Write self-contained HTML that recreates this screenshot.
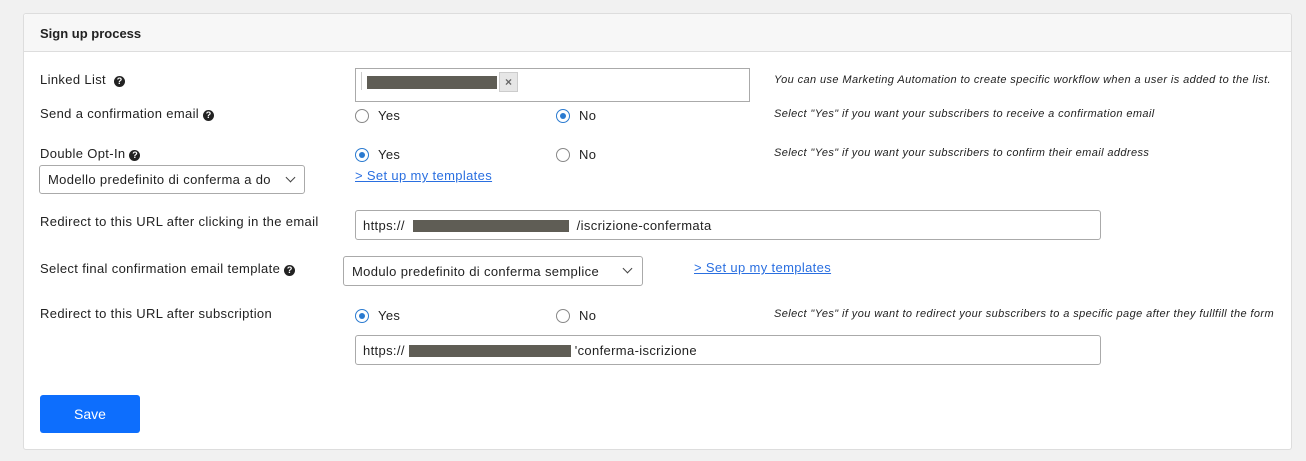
<!DOCTYPE html><html><head><style>
body{margin:0;width:1306px;height:461px;background:#f1f1f1;font-family:"Liberation Sans",sans-serif;font-size:13px;letter-spacing:.35px;color:#222;position:relative;overflow:hidden}
.card{position:absolute;left:23px;top:13px;width:1267px;height:435px;background:#fff;border:1px solid #ddd;border-radius:3px}
.hd{position:absolute;left:0;top:0;right:0;height:37px;background:#f7f7f7;border-bottom:1px solid #ddd;border-radius:3px 3px 0 0}
.a{position:absolute;white-space:nowrap}
.q{display:inline-block;width:11px;height:11px;border-radius:50%;background:#222;color:#fff;font-size:9px;font-weight:bold;text-align:center;line-height:11px;vertical-align:0px;letter-spacing:0}
.hint{font-style:italic;font-size:11px;letter-spacing:.4px;color:#222}
.r{display:inline-block;width:14px;height:14px;border:1px solid #888;border-radius:50%;box-sizing:border-box;vertical-align:-3px;margin-right:9px;position:relative}
.r.on{border-color:#2a7ad0}.r.on:after{content:"";position:absolute;left:3px;top:3px;width:6px;height:6px;border-radius:50%;background:#2a7ad0}
.inp{position:absolute;border:1px solid #aaa;border-radius:3px;box-sizing:border-box;background:#fff}
.bar{display:inline-block;background:#5f5d55;height:12px;vertical-align:-2px}
a{color:#2a6fe0;text-decoration:underline}
.chev{position:absolute;width:6px;height:6px;border-right:1.5px solid #444;border-bottom:1.5px solid #444;transform:rotate(45deg)}
</style></head><body>
<div class="card"><div class="hd"></div></div>
<div class="a" style="left:40px;top:26px;font-weight:bold;letter-spacing:0">Sign up process</div>

<div class="a" style="left:40px;top:72px">Linked List &nbsp;<span class="q">?</span></div>
<div class="inp" style="left:355px;top:68px;width:395px;height:34px;border-color:#aaa;border-radius:0"></div>
<div class="a" style="left:361px;top:72px;width:1px;height:18px;border-left:1px solid #ccc"></div>
<div class="a" style="left:367px;top:76px;width:130px;height:13px;background:#5f5d55"></div>
<div class="a" style="left:499px;top:72px;width:19px;height:20px;background:#e6e6e6;border:1px solid #ccc;box-sizing:border-box;font-size:12px;color:#666;text-align:center;line-height:18px;font-weight:bold;letter-spacing:0">×</div>
<div class="a hint" style="left:774px;top:74px">You can use Marketing Automation to create specific workflow when a user is added to the list.</div>

<div class="a" style="left:40px;top:106px">Send a confirmation email <span class="q">?</span></div>
<div class="a" style="left:355px;top:108px"><span class="r"></span>Yes</div>
<div class="a" style="left:556px;top:108px"><span class="r on"></span>No</div>
<div class="a hint" style="left:774px;top:108px">Select "Yes" if you want your subscribers to receive a confirmation email</div>

<div class="a" style="left:40px;top:146px">Double Opt-In <span class="q">?</span></div>
<div class="a" style="left:355px;top:147px"><span class="r on"></span>Yes</div>
<div class="a" style="left:556px;top:147px"><span class="r"></span>No</div>
<div class="a hint" style="left:774px;top:147px">Select "Yes" if you want your subscribers to confirm their email address</div>
<div class="inp" style="left:39px;top:165px;width:266px;height:29px"></div>
<div class="a" style="left:48px;top:172px;width:232px;overflow:hidden">Modello predefinito di conferma a do</div>
<div class="chev" style="left:287px;top:174px"></div>
<div class="a" style="left:355px;top:168px"><a>&gt; Set up my templates</a></div>

<div class="a" style="left:40px;top:214px">Redirect to this URL after clicking in the email</div>
<div class="inp" style="left:355px;top:210px;width:746px;height:30px"></div>
<div class="a" style="left:363px;top:218px">https:// &nbsp;<span class="bar" style="width:156px"></span>&nbsp;&nbsp;/iscrizione-confermata</div>

<div class="a" style="left:40px;top:261px">Select final confirmation email template <span class="q">?</span></div>
<div class="inp" style="left:343px;top:256px;width:300px;height:30px"></div>
<div class="a" style="left:352px;top:264px">Modulo predefinito di conferma semplice</div>
<div class="chev" style="left:624px;top:265px"></div>
<div class="a" style="left:694px;top:260px"><a>&gt; Set up my templates</a></div>

<div class="a" style="left:40px;top:306px">Redirect to this URL after subscription</div>
<div class="a" style="left:355px;top:308px"><span class="r on"></span>Yes</div>
<div class="a" style="left:556px;top:308px"><span class="r"></span>No</div>
<div class="a hint" style="left:774px;top:308px">Select "Yes" if you want to redirect your subscribers to a specific page after they fullfill the form</div>
<div class="inp" style="left:355px;top:335px;width:746px;height:30px"></div>
<div class="a" style="left:363px;top:343px">https:// <span class="bar" style="width:162px"></span> 'conferma-iscrizione</div>

<div class="a" style="left:40px;top:395px;width:100px;height:38px;background:#0d6efd;border-radius:3px;color:#fff;font-size:14px;text-align:center;line-height:38px;letter-spacing:0">Save</div>
</body></html>
